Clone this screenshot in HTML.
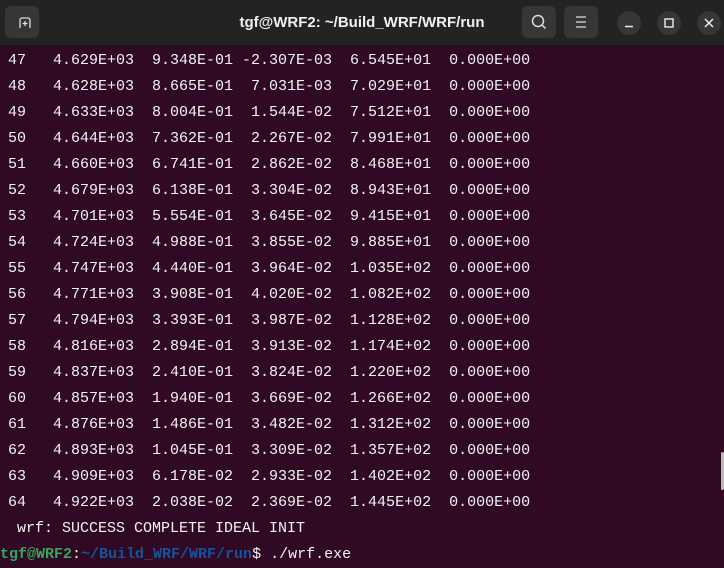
<!DOCTYPE html>
<html><head><style>
body{margin:0;width:724px;height:562px;overflow:hidden;background:#300a24;font-family:"Liberation Mono",monospace;}
.tb{position:absolute;left:0;top:0;width:724px;height:45px;background:#232323;}
.btn{position:absolute;top:6px;width:34px;height:32px;background:#363636;border-radius:6px;}
.circ{position:absolute;top:11px;width:24px;height:24px;border-radius:50%;background:#363636;}
.title{position:absolute;top:0;left:0;width:724px;text-align:center;font:bold 15px "Liberation Sans",sans-serif;line-height:45px;color:#f0f0f0;}
pre{position:absolute;left:8px;top:48px;margin:0;font-size:15px;line-height:26px;color:#f2f2f2;font-family:"Liberation Mono",monospace;}
.p{position:absolute;left:0;top:542px;font-size:15px;line-height:26px;color:#f2f2f2;white-space:pre;}
.g{color:#3aa55a;font-weight:bold}.b{color:#17529c;font-weight:bold}
</style></head><body>
<div class="tb">
<div class="btn" style="left:5px"><svg width="34" height="32"><path d="M15 22V14a2 2 0 0 1 2-2h6a2 2 0 0 1 2 2v8M20 15v5M17.5 17.5h5" stroke="#ddd" stroke-width="1.3" fill="none"/></svg></div>
<div class="title">tgf@WRF2: ~/Build_WRF/WRF/run</div>
<div class="btn" style="left:522px"><svg width="34" height="32"><circle cx="16" cy="15" r="5.5" stroke="#ddd" stroke-width="1.5" fill="none"/><path d="M20 19l3.5 3.5" stroke="#ddd" stroke-width="1.5"/></svg></div>
<div class="btn" style="left:564px"><svg width="34" height="32"><path d="M12 11h10M12 16h10M12 21h10" stroke="#ddd" stroke-width="1.3"/></svg></div>
<div class="circ" style="left:617px"><svg width="24" height="24"><path d="M8 15.5h8" stroke="#eee" stroke-width="1.5"/></svg></div>
<div class="circ" style="left:657px"><svg width="24" height="24"><rect x="8" y="8" width="8" height="8" stroke="#eee" stroke-width="1.4" fill="none"/></svg></div>
<div class="circ" style="left:697px"><svg width="24" height="24"><path d="M8 8l8 8M16 8l-8 8" stroke="#eee" stroke-width="1.5"/></svg></div>
</div>
<pre>47   4.629E+03  9.348E-01 -2.307E-03  6.545E+01  0.000E+00
48   4.628E+03  8.665E-01  7.031E-03  7.029E+01  0.000E+00
49   4.633E+03  8.004E-01  1.544E-02  7.512E+01  0.000E+00
50   4.644E+03  7.362E-01  2.267E-02  7.991E+01  0.000E+00
51   4.660E+03  6.741E-01  2.862E-02  8.468E+01  0.000E+00
52   4.679E+03  6.138E-01  3.304E-02  8.943E+01  0.000E+00
53   4.701E+03  5.554E-01  3.645E-02  9.415E+01  0.000E+00
54   4.724E+03  4.988E-01  3.855E-02  9.885E+01  0.000E+00
55   4.747E+03  4.440E-01  3.964E-02  1.035E+02  0.000E+00
56   4.771E+03  3.908E-01  4.020E-02  1.082E+02  0.000E+00
57   4.794E+03  3.393E-01  3.987E-02  1.128E+02  0.000E+00
58   4.816E+03  2.894E-01  3.913E-02  1.174E+02  0.000E+00
59   4.837E+03  2.410E-01  3.824E-02  1.220E+02  0.000E+00
60   4.857E+03  1.940E-01  3.669E-02  1.266E+02  0.000E+00
61   4.876E+03  1.486E-01  3.482E-02  1.312E+02  0.000E+00
62   4.893E+03  1.045E-01  3.309E-02  1.357E+02  0.000E+00
63   4.909E+03  6.178E-02  2.933E-02  1.402E+02  0.000E+00
64   4.922E+03  2.038E-02  2.369E-02  1.445E+02  0.000E+00
 wrf: SUCCESS COMPLETE IDEAL INIT</pre>
<div class="p"><span class="g">tgf@WRF2</span>:<span class="b">~/Build_WRF/WRF/run</span>$ ./wrf.exe</div>
<div style="position:absolute;left:721px;top:452px;width:3px;height:38px;background:#bbb;border-radius:2px"></div>
</body></html>
